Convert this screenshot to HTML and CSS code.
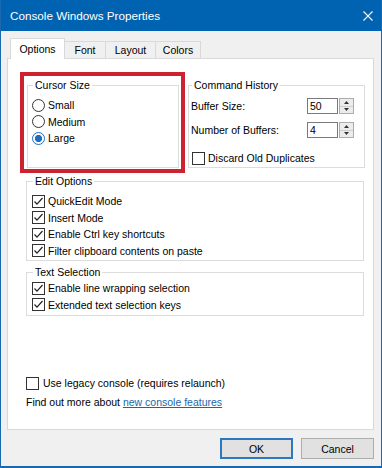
FILE: index.html
```html
<!DOCTYPE html>
<html>
<head>
<meta charset="utf-8">
<link rel="stylesheet" href="styles.css">
</head>
<body>
<div class="window">
  <div class="titlebar">
    <span class="title">Console Windows Properties</span>
    <svg class="close" width="10" height="10" viewBox="0 0 10 10"><path d="M0.5 0.5L9.5 9.5M9.5 0.5L0.5 9.5" stroke="#fff" stroke-width="1.1" fill="none"/></svg>
  </div>
  <div class="tabs">
    <div class="tab active t-options">Options</div>
    <div class="tab t-font">Font</div>
    <div class="tab t-layout">Layout</div>
    <div class="tab t-colors">Colors</div>
  </div>
  <div class="panel">
    <div class="toprow">
      <div class="highlight">
        <fieldset class="group cursor">
          <legend>Cursor Size</legend>
          <div class="opt"><span class="rb"></span>Small</div>
          <div class="opt"><span class="rb"></span>Medium</div>
          <div class="opt"><span class="rb on"></span>Large</div>
        </fieldset>
      </div>
      <fieldset class="group history">
        <legend>Command History</legend>
        <div class="field">
          <span class="lbl">Buffer Size:</span>
          <span class="input">50</span>
          <span class="spin"><span class="half top"><svg width="5" height="3" viewBox="0 0 5 3"><path d="M0 3L2.5 0L5 3Z" fill="#333"/></svg></span><span class="half"><svg width="5" height="3" viewBox="0 0 5 3"><path d="M0 0L2.5 3L5 0Z" fill="#333"/></svg></span></span>
        </div>
        <div class="field second">
          <span class="lbl">Number of Buffers:</span>
          <span class="input">4</span>
          <span class="spin"><span class="half top"><svg width="5" height="3" viewBox="0 0 5 3"><path d="M0 3L2.5 0L5 3Z" fill="#333"/></svg></span><span class="half"><svg width="5" height="3" viewBox="0 0 5 3"><path d="M0 0L2.5 3L5 0Z" fill="#333"/></svg></span></span>
        </div>
        <div class="opt discard"><span class="cb"></span>Discard Old Duplicates</div>
      </fieldset>
    </div>
    <fieldset class="group edit">
      <legend>Edit Options</legend>
      <div class="opt"><span class="cb"><svg width="11" height="11" viewBox="0 0 11 11"><path d="M1.5 5.5L4 8.2L9.5 2" stroke="#222" stroke-width="1.2" fill="none"/></svg></span>QuickEdit Mode</div>
      <div class="opt"><span class="cb"><svg width="11" height="11" viewBox="0 0 11 11"><path d="M1.5 5.5L4 8.2L9.5 2" stroke="#222" stroke-width="1.2" fill="none"/></svg></span>Insert Mode</div>
      <div class="opt"><span class="cb"><svg width="11" height="11" viewBox="0 0 11 11"><path d="M1.5 5.5L4 8.2L9.5 2" stroke="#222" stroke-width="1.2" fill="none"/></svg></span>Enable Ctrl key shortcuts</div>
      <div class="opt"><span class="cb"><svg width="11" height="11" viewBox="0 0 11 11"><path d="M1.5 5.5L4 8.2L9.5 2" stroke="#222" stroke-width="1.2" fill="none"/></svg></span>Filter clipboard contents on paste</div>
    </fieldset>
    <fieldset class="group textsel">
      <legend>Text Selection</legend>
      <div class="opt"><span class="cb"><svg width="11" height="11" viewBox="0 0 11 11"><path d="M1.5 5.5L4 8.2L9.5 2" stroke="#222" stroke-width="1.2" fill="none"/></svg></span>Enable line wrapping selection</div>
      <div class="opt"><span class="cb"><svg width="11" height="11" viewBox="0 0 11 11"><path d="M1.5 5.5L4 8.2L9.5 2" stroke="#222" stroke-width="1.2" fill="none"/></svg></span>Extended text selection keys</div>
    </fieldset>
    <div class="opt legacy"><span class="cb"></span>Use legacy console (requires relaunch)</div>
    <div class="more">Find out more about <a class="link">new console features</a></div>
  </div>
  <div class="buttons">
    <div class="btn ok">OK</div>
    <div class="btn">Cancel</div>
  </div>
</div>
</body>
</html>
```
FILE: styles.css
```css
* { box-sizing: border-box; }
html, body { margin: 0; padding: 0; }
body {
  width: 382px;
  height: 468px;
  overflow: hidden;
  background: #fff;
  font-family: "Liberation Sans", Arial, sans-serif;
  font-size: 10.5px;
  color: #000;
}
.window {
  width: 382px;
  height: 468px;
  background: #f0f0f0;
  border: 1px solid #1a68b0;
  border-top: none;
  border-bottom-width: 2px;
  display: flex;
  flex-direction: column;
}
.titlebar {
  flex: none;
  height: 31px;
  background: #0063b1;
  color: #fff;
  display: flex;
  align-items: center;
  justify-content: space-between;
  padding: 0 8px 0 9px;
}
.title { font-size: 11.7px; }
.close { display: block; }

.tabs {
  flex: none;
  height: 20px;
  margin-top: 7px;
  padding-left: 9px;
  display: flex;
  align-items: flex-end;
}
.tab {
  height: 17px;
  border: 1px solid #d9d9d9;
  border-bottom: none;
  margin-left: -1px;
  background: #f0f0f0;
  display: flex;
  align-items: center;
  justify-content: center;
}
.tab.active {
  height: 21px;
  margin-bottom: -1px;
  margin-left: 0;
  background: #fff;
  position: relative;
  z-index: 1;
}
.t-options { width: 55px; }
.t-font { width: 42px; }
.t-layout { width: 51px; }
.t-colors { width: 46px; }

.panel {
  flex: none;
  margin-left: 6px;
  width: 367px;
  height: 372px;
  background: #fff;
  border: 1px solid #d9d9d9;
  padding-top: 13px;
  display: flex;
  flex-direction: column;
  align-items: flex-start;
}
.toprow {
  display: flex;
  align-items: flex-start;
  margin-left: 12px;
}
.highlight {
  width: 165px;
  height: 101px;
  border: 4px solid #cf2230;
  padding: 3px 2px 1px 3px;
  display: flex;
}
.group {
  margin: 0;
  min-width: 0;
  border: 1px solid #dcdcdc;
  padding: 0 4px;
}
.group legend {
  padding: 0 2px;
  margin-left: 1px;
  line-height: 12px;
}
.cursor {
  flex: 1;
  padding-top: 6px;
}
.history {
  width: 177px;
  height: 89px;
  margin-left: 3px;
  margin-top: 7px;
  padding: 7px 10px 0 2px;
}
.edit {
  width: 338px;
  margin: 2px 0 0 18px;
  padding: 6px 5px 1px 5px;
}
.textsel {
  width: 338px;
  margin: 5px 0 0 18px;
  padding: 2px 5px 2px 5px;
}

.opt {
  display: flex;
  align-items: center;
  height: 16.5px;
  white-space: nowrap;
}
.rb {
  flex: none;
  width: 13px;
  height: 13px;
  border-radius: 50%;
  border: 1px solid #333;
  background: #fff;
  margin-right: 3px;
}
.rb.on {
  border-color: #1c70c2;
  background: radial-gradient(circle, #1c6fc0 0 3.3px, #fff 3.9px);
}
.cb {
  flex: none;
  width: 13px;
  height: 13px;
  border: 1px solid #333;
  background: #fff;
  margin-right: 3px;
  display: flex;
  align-items: center;
  justify-content: center;
}
.cb svg { display: block; }

.field {
  display: flex;
  align-items: center;
  height: 16px;
}
.field.second { margin-top: 8px; }
.lbl { flex: 1; }
.input {
  width: 31px;
  height: 16px;
  border: 1px solid #7a7a7a;
  background: #fff;
  padding-left: 2px;
  display: flex;
  align-items: center;
}
.spin {
  width: 15px;
  height: 16px;
  margin-left: 1px;
  border: 1px solid #adadad;
  background: #ececec;
  display: flex;
  flex-direction: column;
}
.half {
  flex: 1;
  display: flex;
  align-items: center;
  justify-content: center;
}
.half svg { display: block; }
.half.top { border-bottom: 1px solid #cfcfcf; }
.discard {
  margin-top: 12px;
  margin-left: 1px;
  height: 16px;
}

.legacy {
  margin: 59px 0 0 18px;
  height: 16px;
}
.legacy .cb { margin-right: 4px; }
.more {
  margin: 3px 0 0 18px;
  height: 16px;
  display: flex;
  align-items: center;
  white-space: pre;
}
.link {
  color: #1a67a8;
  text-decoration: underline;
}

.buttons {
  flex: none;
  width: 373px;
  margin-top: 8px;
  display: flex;
  justify-content: flex-end;
  gap: 8px;
}
.btn {
  width: 73px;
  height: 21px;
  background: #e1e1e1;
  border: 1px solid #adadad;
  display: flex;
  align-items: center;
  justify-content: center;
}
.btn.ok {
  border: 2px solid #2b78bf;
}
```
